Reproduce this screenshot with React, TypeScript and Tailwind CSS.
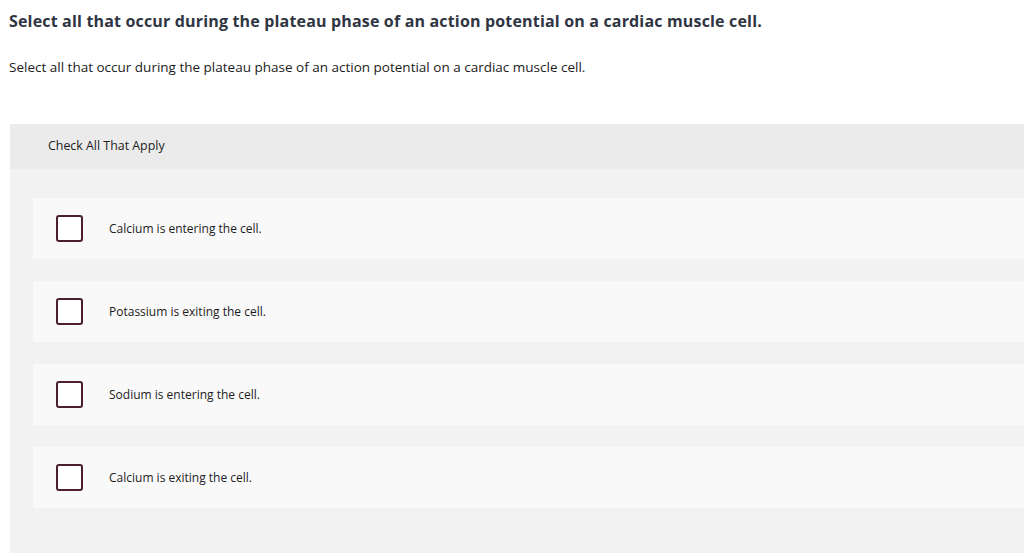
import React from "react";

const items = [
  "Calcium is entering the cell.",
  "Potassium is exiting the cell.",
  "Sodium is entering the cell.",
  "Calcium is exiting the cell.",
];

export default function App() {
  return (
    <div
      className="w-[1024px] h-[556px] bg-white overflow-hidden"
      style={{ fontFamily: "'Open Sans', Lato, sans-serif" }}
    >
      <h1 className="pl-[9px] pt-[11px] text-[16px] leading-[20px] font-bold text-[#2f3542] tracking-[0.17px]">
        Select all that occur during the plateau phase of an action potential on a cardiac muscle cell.
      </h1>
      <p className="pl-[9px] pt-[27px] text-[13.5px] leading-[18px] text-[#1c1c1c]">
        Select all that occur during the plateau phase of an action potential on a cardiac muscle cell.
      </p>
      <div className="ml-[10px] mt-[48px] bg-[#f2f2f2] h-[429px]">
        <div className="h-[45px] bg-[#ebebeb] flex items-center pl-[38px] text-[12.4px] text-[#1c1c1c]">
          Check All That Apply
        </div>
        <div className="pt-[29px] pl-[23px] flex flex-col gap-[22px]">
          {items.map((t) => (
            <div key={t} className="h-[61px] bg-[#f9f9f9] flex items-center">
              <div className="ml-[23px] w-[27px] h-[27px] border-2 border-[#4b1f2b] rounded-[3px] bg-white" />
              <span className="ml-[26px] text-[12px] text-[#1c1c1c]">{t}</span>
            </div>
          ))}
        </div>
      </div>
    </div>
  );
}
